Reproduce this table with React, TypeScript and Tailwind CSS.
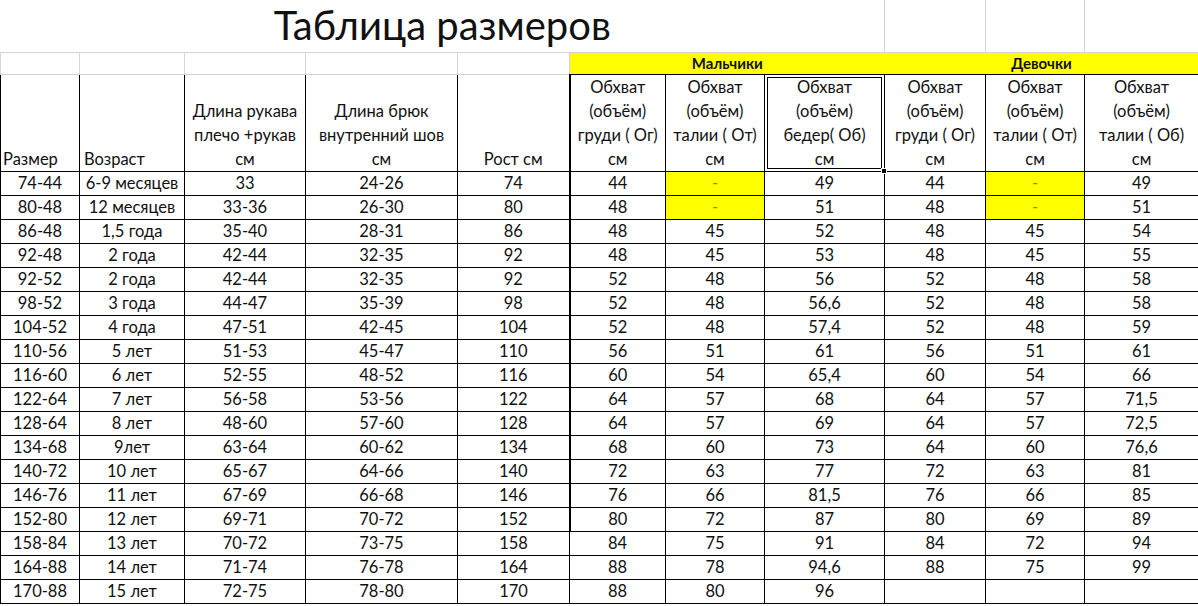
import React from 'react';

type Row = string[];

// Размер, Возраст, рукав, брюки, рост, М: грудь, талия, бедра, Д: грудь, талия, талия(Об)
const rows: Row[] = [
  ['74-44', '6-9 месяцев', '33', '24-26', '74', '44', '-', '49', '44', '-', '49'],
  ['80-48', '12 месяцев', '33-36', '26-30', '80', '48', '-', '51', '48', '-', '51'],
  ['86-48', '1,5 года', '35-40', '28-31', '86', '48', '45', '52', '48', '45', '54'],
  ['92-48', '2 года', '42-44', '32-35', '92', '48', '45', '53', '48', '45', '55'],
  ['92-52', '2 года', '42-44', '32-35', '92', '52', '48', '56', '52', '48', '58'],
  ['98-52', '3 года', '44-47', '35-39', '98', '52', '48', '56,6', '52', '48', '58'],
  ['104-52', '4 года', '47-51', '42-45', '104', '52', '48', '57,4', '52', '48', '59'],
  ['110-56', '5 лет', '51-53', '45-47', '110', '56', '51', '61', '56', '51', '61'],
  ['116-60', '6 лет', '52-55', '48-52', '116', '60', '54', '65,4', '60', '54', '66'],
  ['122-64', '7 лет', '56-58', '53-56', '122', '64', '57', '68', '64', '57', '71,5'],
  ['128-64', '8 лет', '48-60', '57-60', '128', '64', '57', '69', '64', '57', '72,5'],
  ['134-68', '9лет', '63-64', '60-62', '134', '68', '60', '73', '64', '60', '76,6'],
  ['140-72', '10 лет', '65-67', '64-66', '140', '72', '63', '77', '72', '63', '81'],
  ['146-76', '11 лет', '67-69', '66-68', '146', '76', '66', '81,5', '76', '66', '85'],
  ['152-80', '12 лет', '69-71', '70-72', '152', '80', '72', '87', '80', '69', '89'],
  ['158-84', '13 лет', '70-72', '73-75', '158', '84', '75', '91', '84', '72', '94'],
  ['164-88', '14 лет', '71-74', '76-78', '164', '88', '78', '94,6', '88', '75', '99'],
  ['170-88', '15 лет', '72-75', '78-80', '170', '88', '80', '96', '', '', ''],
];

const girth = (part: string) => (
  <>
    Обхват
    <br />
    (объём)
    <br />
    {part}
    <br />
    см
  </>
);

const App = () => {
  const grid = 'border border-[#d4d4d4]';
  const topGrid = 'border-l border-r border-b border-[#d4d4d4]';
  const cell = 'border border-black p-0 h-[24px] leading-[22px] text-center whitespace-nowrap';
  const head = 'border border-black p-0 align-bottom text-center leading-[24px] whitespace-nowrap';

  return (
    <div className="w-[1198px] h-[606px] overflow-hidden bg-white text-[#111] font-['Lato','Noto_Sans',sans-serif] text-[16.5px]">
      <table className="table-fixed border-collapse w-[1198px]">
        <colgroup>
          <col className="w-[79px]" />
          <col className="w-[105px]" />
          <col className="w-[121px]" />
          <col className="w-[152px]" />
          <col className="w-[112px]" />
          <col className="w-[96px]" />
          <col className="w-[99px]" />
          <col className="w-[120px]" />
          <col className="w-[101px]" />
          <col className="w-[99px]" />
          <col className="w-[114px]" />
        </colgroup>
        <tbody>
          {/* заголовок */}
          <tr className="h-[52px]">
            <td colSpan={8} className="p-0 pt-[1px] text-center align-top border-b border-[#d4d4d4] text-[40px] leading-[48px]">
              Таблица размеров
            </td>
            <td className={topGrid} />
            <td className={topGrid} />
            <td className={topGrid} />
          </tr>

          {/* Мальчики / Девочки */}
          <tr className="h-[22px]">
            <td className={grid} />
            <td className={grid} />
            <td className={grid} />
            <td className={grid} />
            <td className={grid} />
            <td colSpan={3} className="p-0 bg-[#ffff00] text-center font-bold text-[15px] leading-[21px]">
              Мальчики
            </td>
            <td colSpan={3} className="p-0 bg-[#ffff00] text-center font-bold text-[15px] leading-[21px]">
              Девочки
            </td>
          </tr>

          {/* шапка */}
          <tr className="h-[97px]">
            <td className={`${head} text-left pl-[2px]`}>Размер</td>
            <td className={`${head} text-left pl-[4px]`}>Возраст</td>
            <td className={head}>
              Длина рукава
              <br />
              плечо +рукав
              <br />
              см
            </td>
            <td className={head}>
              Длина брюк
              <br />
              внутренний шов
              <br />
              см
            </td>
            <td className={head}>Рост см</td>
            <td className={`${head} border-l-2`}>{girth('груди ( Ог)')}</td>
            <td className={head}>{girth('талии ( От)')}</td>
            <td className={`${head} relative shadow-[inset_0_0_0_2px_#fff,inset_0_0_0_3px_#000]`}>
              {girth('бедер( Об)')}
              <span className="absolute -right-[3px] -bottom-[3px] w-[6px] h-[6px] bg-black border border-white" />
            </td>
            <td className={head}>{girth('груди ( Ог)')}</td>
            <td className={head}>{girth('талии ( От)')}</td>
            <td className={head}>{girth('талии ( Об)')}</td>
          </tr>

          {rows.map((r, i) => (
            <tr key={i} className="h-[24px]">
              {r.map((v, j) => {
                const dash = v === '-';
                const thick = j === 5 && i < 15;
                return (
                  <td
                    key={j}
                    className={`${cell} ${thick ? 'border-l-2' : ''} ${dash ? 'bg-[#ffff00] text-[#8a8a5a]' : ''}`}
                  >
                    {v}
                  </td>
                );
              })}
            </tr>
          ))}
        </tbody>
      </table>
    </div>
  );
};

export default App;
